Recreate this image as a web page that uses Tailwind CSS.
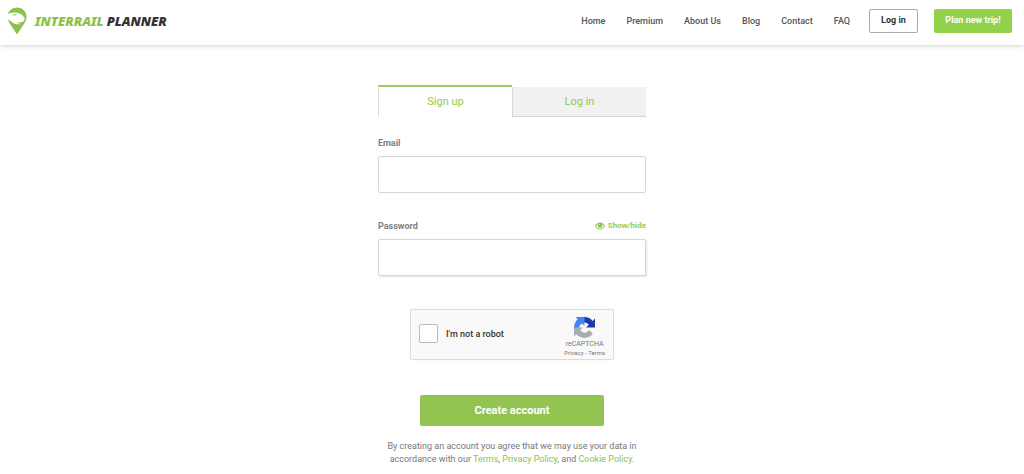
<!DOCTYPE html>
<html lang="en">
<head>
<meta charset="utf-8">
<meta name="viewport" content="width=device-width, initial-scale=1">
<title>Sign up – Interrail Planner</title>
<script src="https://cdn.jsdelivr.net/npm/@tailwindcss/browser@4"></script>
</head>
<body class="bg-white font-['Roboto',sans-serif] text-[9px] text-[#777]">
<header class="flex h-[45px] items-center justify-between bg-white pl-[7px] pr-3 pb-[3px] shadow-[0_1px_4px_rgba(0,0,0,0.18)]">
  <a href="#" class="flex items-center gap-2" aria-label="Interrail Planner">
    <svg class="h-7 w-5" viewBox="0 0 20 28" aria-hidden="true">
      <path fill="#8bc34a" d="M10 0.500C4.600.500.500 4.500.500 9.800c0 3 1.200 5 2.700 7.500L10 27.500l6.800-10.200c1.600-2.500 2.700-4.500 2.700-7.500C19.500 4.500 15.400.500 10 .500z"/>
      <path fill="#fff" d="M0 8C2 6 5 5.300 8.500 5.600c3.700.3 7 2.200 8.700 5 .9 1.600.5 2.900-.9 3.800-1.600 1.100-4.300 1.400-7 .9 1.700 1.100 3.800 1.700 6 1.600-4.600 1.200-8.700-.1-11-2.500C3.200 13.300 1.500 13 0 13.200z"/>
      <path fill="#8bc34a" d="M4.500 8.200c1.800-1 3.800-1.100 5.500-.5l-1 .9c-1.500-.4-3-.5-4.500-.4z"/>
    </svg>
    <span class="whitespace-nowrap font-['Noto_Sans',sans-serif] text-[13px] font-black italic leading-5 text-[#8bc34a]">INTERRAIL <span class="text-[#333]">PLANNER</span></span>
  </a>
  <div class="flex items-center gap-4">
    <nav class="flex items-center gap-[21px] pr-[3px] font-medium leading-4 text-[#555]">
      <a href="#">Home</a>
      <a href="#">Premium</a>
      <a href="#">About Us</a>
      <a href="#">Blog</a>
      <a href="#">Contact</a>
      <a href="#">FAQ</a>
    </nav>
    <button type="button" class="h-6 w-[49px] rounded-[2px] border border-[#aaa] bg-white text-[9px] font-bold text-[#333]">Log in</button>
    <button type="button" class="h-6 w-[78px] rounded-[2px] bg-[#92d149] text-[9px] font-bold text-white">Plan new trip!</button>
  </div>
</header>

<main class="mx-auto mt-10 w-[268px]">
  <div role="tablist" class="flex h-8 text-[11px] text-[#92c94f]">
    <button role="tab" aria-selected="true" type="button" class="flex-1 border-t-2 border-l border-t-[#9ccc65] border-l-[#ddd] bg-white">Sign up</button>
    <button role="tab" aria-selected="false" type="button" class="mt-0.5 flex-1 border-b border-l border-[#d6d6d6] bg-[#f1f1f1] pt-px">Log in</button>
  </div>

  <form>
    <label for="email" class="mt-[18px] block font-bold leading-4 text-[#808080]">Email</label>
    <input id="email" type="email" class="mt-[5px] block h-[37px] w-full rounded-[2px] border border-[#d6d6d6] bg-white px-3 text-[11px] outline-none">

    <div class="mt-[25px] flex items-center justify-between leading-4">
      <label for="password" class="font-bold text-[#808080]">Password</label>
      <button type="button" class="flex items-center gap-[3px] text-[8px] font-bold text-[#92cd4f]">
        <svg class="h-2 w-2.5" viewBox="0 0 20 14" aria-hidden="true">
          <path fill="#8bc34a" fill-rule="evenodd" d="M10 0C5.500 0 2 2.800 0 7c2 4.200 5.500 7 10 7s8-2.800 10-7c-2-4.200-5.500-7-10-7zM2 7c1-1.900 2.300-3.400 4-4.200C4.800 5 5 7.500 6.500 9c2 1.900 5.200 1.800 7-.1 1.500-1.600 1.600-4.100.5-6.100 1.700.8 3 2.300 4 4.200-1.700 3.200-4.400 5.200-8 5.200S3.700 10.200 2 7zM7.300 5.200C7.500 3.700 8.600 2.600 10 2.500v1.100c-.8.100-1.400.7-1.500 1.600z"/>
        </svg>
        Show/hide
      </button>
    </div>
    <input id="password" type="password" class="mt-[5px] block h-[37px] w-full rounded-[2px] border border-[#d6d6d6] bg-white px-3 text-[11px] shadow-[1px_1px_2px_rgba(0,0,0,0.12)] outline-none">

    <div class="mx-auto mt-[33px] flex h-[51px] w-[204px] items-center justify-between rounded-[2px] border border-[#dcdcdc] bg-[#f9f9f9] px-2 shadow-[0_0_2px_rgba(0,0,0,0.08)]">
      <div class="flex items-center gap-2 pb-0.5">
        <input id="robot" type="checkbox" class="h-[19px] w-[19px] appearance-none rounded-[2px] border border-[#bbb] bg-white checked:bg-[#4285f4]">
        <label for="robot" class="font-medium leading-4 text-[#333]">I'm not a robot</label>
      </div>
      <div class="flex flex-col items-center pt-1 text-[#777]">
        <svg class="mb-px h-[21px] w-[21px]" viewBox="0 0 64 64" aria-hidden="true">
          <path fill="#1c3aa9" d="M64 31.955l-.033-1.370V4.687l-7.160 7.160C50.948 4.674 42.033.093 32.050.093c-10.400 0-19.622 4.960-25.458 12.640l11.736 11.860a15.550 15.550 0 0 1 4.754-5.334c2.050-1.600 4.952-2.906 8.968-2.906.485 0 .860.057 1.135.163 4.976.393 9.288 3.140 11.828 7.124l-8.307 8.307L64 31.953"/>
          <path fill="#4285f4" d="M31.862.094l-1.370.033H4.594l7.160 7.160C4.580 13.147 0 22.060 0 32.046c0 10.400 4.960 19.622 12.640 25.458L24.500 45.768a15.550 15.550 0 0 1-5.334-4.754c-1.600-2.050-2.906-4.952-2.906-8.968 0-.485.057-.860.163-1.135.393-4.976 3.140-9.288 7.124-11.828l8.307 8.307L31.860.095"/>
          <path fill="#ababab" d="M.001 32.045l.033 1.370v25.898l7.160-7.160c5.860 7.173 14.774 11.754 24.760 11.754 10.400 0 19.622-4.960 25.458-12.640l-11.736-11.860a15.550 15.550 0 0 1-4.754 5.334c-2.050 1.600-4.952 2.906-8.968 2.906-.485 0-.860-.057-1.135-.163-4.976-.393-9.288-3.140-11.828-7.124l8.307-8.307L0 32.047"/>
        </svg>
        <span class="text-[7px] leading-[10px]">reCAPTCHA</span>
        <span class="text-[6px] leading-[7px]"><a href="#">Privacy</a> - <a href="#">Terms</a></span>
      </div>
    </div>

    <button type="submit" class="mx-auto mt-[35px] block h-[31px] w-[184px] rounded-[2px] bg-[#93c452] pt-px text-[11px] font-bold text-white">Create account</button>
    <p class="mt-3.5 text-center leading-[13px]">By creating an account you agree that we may use your data in accordance with our <a href="#" class="text-[#8bc34a]">Terms</a>, <a href="#" class="text-[#8bc34a]">Privacy Policy</a>, and <a href="#" class="text-[#8bc34a]">Cookie Policy</a>.</p>
  </form>
</main>
</body>
</html>
